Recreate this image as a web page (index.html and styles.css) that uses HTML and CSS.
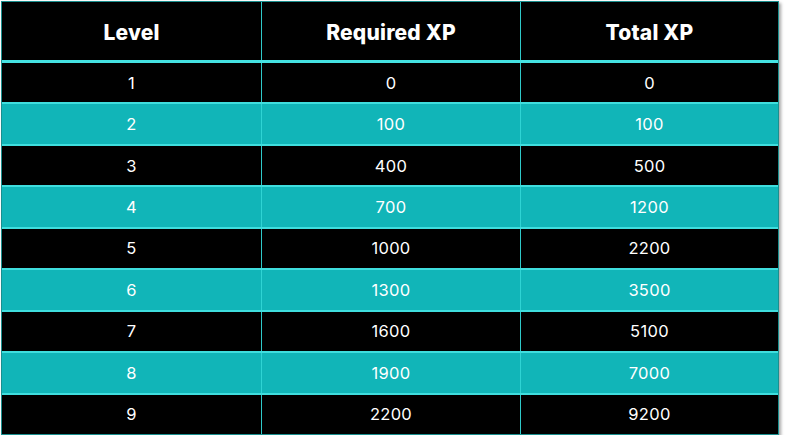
FILE: index.html
```html
<!DOCTYPE html>
<html>
<head>
<meta charset="utf-8">
<link rel="stylesheet" href="styles.css">
</head>
<body>
<div class="card">
  <div class="row head"><div class="cell">Level</div><div class="cell">Required XP</div><div class="cell">Total XP</div></div>
  <div class="row dark"><div class="cell">1</div><div class="cell">0</div><div class="cell">0</div></div>
  <div class="row teal"><div class="cell">2</div><div class="cell">100</div><div class="cell">100</div></div>
  <div class="row dark"><div class="cell">3</div><div class="cell">400</div><div class="cell">500</div></div>
  <div class="row teal"><div class="cell">4</div><div class="cell">700</div><div class="cell">1200</div></div>
  <div class="row dark"><div class="cell">5</div><div class="cell">1000</div><div class="cell">2200</div></div>
  <div class="row teal"><div class="cell">6</div><div class="cell">1300</div><div class="cell">3500</div></div>
  <div class="row dark"><div class="cell">7</div><div class="cell">1600</div><div class="cell">5100</div></div>
  <div class="row teal"><div class="cell">8</div><div class="cell">1900</div><div class="cell">7000</div></div>
  <div class="row dark last"><div class="cell">9</div><div class="cell">2200</div><div class="cell">9200</div></div>
</div>
</body>
</html>
```
FILE: styles.css
```css
html, body {
  margin: 0;
  padding: 0;
  background: #ffffff;
}
body {
  padding: 1px 0 0 1px;
  font-family: Inter, "Noto Sans", sans-serif;
}
.card {
  width: 778px;
  height: 434px;
  background: #000;
  border: 1px solid #1a8f8f;
  box-sizing: border-box;
  box-shadow: 2px 2px 3px rgba(0,0,0,0.35);
  display: flex;
  flex-direction: column;
}
.row {
  display: grid;
  grid-template-columns: 259px 259px 1fr;
  flex: 1 1 0;
  border-top: 2px solid #3fdede;
}
.row.head {
  flex: 0 0 58px;
  border-top: none;
  border-bottom: 3px solid #45e3e3;
}
.row.head + .row { border-top: none; }
.cell {
  display: flex;
  align-items: center;
  justify-content: center;
  color: #fff;
  font-size: 16.5px;
  font-weight: 400;
  letter-spacing: 0.3px;
  border-left: 1px solid #2fc9c9;
}
.cell:first-child { border-left: none; }
.head .cell {
  font-size: 21px;
  font-weight: 800;
  letter-spacing: 0.2px;
  padding-top: 2px;
}
.teal { background: #11b5b8; }
.teal .cell { border-left-color: #2fd4d4; }
```
